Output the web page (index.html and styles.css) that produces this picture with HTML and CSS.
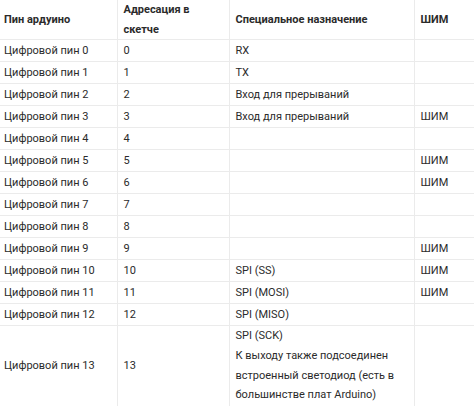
FILE: index.html
```html
<!DOCTYPE html>
<html lang="ru">
<head>
<meta charset="utf-8">
<title>Пины Arduino</title>
<link rel="stylesheet" href="styles.css">
</head>
<body>
<table class="pins">
  <colgroup>
    <col class="c1"><col class="c2"><col class="c3"><col class="c4">
  </colgroup>
  <thead>
    <tr><th>Пин ардуино</th><th>Адресация в скетче</th><th>Специальное назначение</th><th class="last">ШИМ</th></tr>
  </thead>
  <tbody>
    <tr><td>Цифровой пин 0</td><td>0</td><td>RX</td><td class="last"></td></tr>
    <tr><td>Цифровой пин 1</td><td>1</td><td>TX</td><td class="last"></td></tr>
    <tr><td>Цифровой пин 2</td><td>2</td><td>Вход для прерываний</td><td class="last"></td></tr>
    <tr><td>Цифровой пин 3</td><td>3</td><td>Вход для прерываний</td><td class="last">ШИМ</td></tr>
    <tr><td>Цифровой пин 4</td><td>4</td><td></td><td class="last"></td></tr>
    <tr><td>Цифровой пин 5</td><td>5</td><td></td><td class="last">ШИМ</td></tr>
    <tr><td>Цифровой пин 6</td><td>6</td><td></td><td class="last">ШИМ</td></tr>
    <tr><td>Цифровой пин 7</td><td>7</td><td></td><td class="last"></td></tr>
    <tr><td>Цифровой пин 8</td><td>8</td><td></td><td class="last"></td></tr>
    <tr><td>Цифровой пин 9</td><td>9</td><td></td><td class="last">ШИМ</td></tr>
    <tr><td>Цифровой пин 10</td><td>10</td><td>SPI (SS)</td><td class="last">ШИМ</td></tr>
    <tr><td>Цифровой пин 11</td><td>11</td><td>SPI (MOSI)</td><td class="last">ШИМ</td></tr>
    <tr><td>Цифровой пин 12</td><td>12</td><td>SPI (MISO)</td><td class="last"></td></tr>
    <tr><td>Цифровой пин 13</td><td>13</td><td>SPI (SCK)<br>К выходу также подсоединен встроенный светодиод (есть в большинстве плат Arduino)</td><td class="last"></td></tr>
  </tbody>
</table>
</body>
</html>
```
FILE: styles.css
```css
html, body {
  margin: 0;
  padding: 0;
  background: #fff;
}
body {
  font-family: Roboto, "Liberation Sans", Arial, sans-serif;
  font-size: 11px;
  color: #2b2b2b;
}
.pins {
  border-collapse: collapse;
  table-layout: fixed;
  width: 474px;
}
.c1 { width: 117px; }
.c2 { width: 112px; }
.c3 { width: 185px; }
.c4 { width: 60px; }
.pins th,
.pins td {
  text-align: left;
  vertical-align: middle;
  line-height: 19.6px;
  padding: 0.7px 6px;
  border-top: 1px solid #ebebeb;
  border-bottom: 1px solid #ebebeb;
  border-left: 1px solid #ebebeb;
  border-right: 0;
}
.pins th {
  font-weight: 700;
  padding-top: 0;
  padding-bottom: 0;
  border-top: 0;
}
.pins tr > :first-child {
  padding-left: 4px;
  border-left: 0;
}
.pins tbody tr:last-child td {
  border-bottom: 0;
}
```
